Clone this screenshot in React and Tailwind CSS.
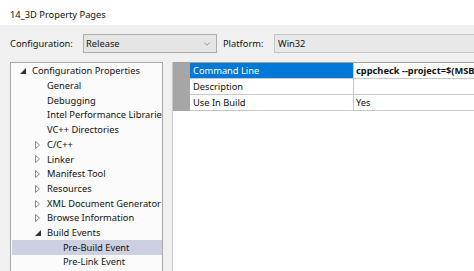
import { ChevronDown } from 'lucide-react';

const treeItems = [
  { label: 'Configuration Properties', level: 0, state: 'open' },
  { label: 'General', level: 1 },
  { label: 'Debugging', level: 1 },
  { label: 'Intel Performance Libraries', level: 1 },
  { label: 'VC++ Directories', level: 1 },
  { label: 'C/C++', level: 1, state: 'closed' },
  { label: 'Linker', level: 1, state: 'closed' },
  { label: 'Manifest Tool', level: 1, state: 'closed' },
  { label: 'Resources', level: 1, state: 'closed' },
  { label: 'XML Document Generator', level: 1, state: 'closed' },
  { label: 'Browse Information', level: 1, state: 'closed' },
  { label: 'Build Events', level: 1, state: 'open' },
  { label: 'Pre-Build Event', level: 2, selected: true },
  { label: 'Pre-Link Event', level: 2 },
];

const props = [
  { name: 'Command Line', value: 'cppcheck --project=$(MSBuildProjectFullPath)', selected: true },
  { name: 'Description', value: '' },
  { name: 'Use In Build', value: 'Yes' },
];

// little tree expander glyphs
const Expander = ({ state }) => {
  if (state === 'open') {
    return (
      <svg width="6" height="6" viewBox="0 0 6 6">
        <path d="M6 0 L6 6 L0 6 Z" fill="#333" />
      </svg>
    );
  }
  return (
    <svg width="5" height="8" viewBox="0 0 5 8">
      <path d="M0.5 0.5 L4.5 4 L0.5 7.5 Z" fill="none" stroke="#8a8a8a" strokeWidth="1" />
    </svg>
  );
};

const indent = ['pl-[20px]', 'pl-[35px]', 'pl-[51px]'];

const App = () => {
  return (
    <div
      className="w-[474px] h-[271px] overflow-hidden bg-[#f0f0f0] text-[9.3px] text-[#111]"
      style={{ fontFamily: '"Noto Sans", sans-serif' }}
    >
      {/* title bar */}
      <div className="h-[25px] bg-white flex items-center pl-[10px] pt-[5px]">
        14_3D Property Pages
      </div>

      {/* configuration row */}
      <div className="flex items-center mt-[9px] h-[19px]">
        <span className="pl-[10px] w-[83px] shrink-0">Configuration:</span>
        <div className="w-[134px] shrink-0 h-[19px] bg-[#e5e5e5] border border-[#adadad] flex items-center justify-between pl-[2px] pr-[4px]">
          <span>Release</span>
          <ChevronDown size={10} strokeWidth={1.3} className="text-[#555]" />
        </div>
        <span className="ml-[6px] w-[51px] shrink-0">Platform:</span>
        <div className="flex-1 h-[19px] bg-[#e8e8e8] border border-[#c4c4c4] border-r-0 flex items-center pl-[3px]">
          <span>Win32</span>
        </div>
      </div>

      {/* main area */}
      <div className="flex mt-[9px] h-[209px]">
        <div className="ml-[10px] w-[153px] shrink-0 h-[220px] bg-[#fbfbfb] border border-[#a9a9a9] pt-[1px] pl-[1px] overflow-hidden">
          {treeItems.map((item, i) => (
            <div
              key={i}
              className={`relative h-[14.7px] flex items-center whitespace-nowrap ${indent[item.level]} ${item.selected ? 'bg-[#cdd0e0]' : ''}`}
            >
              {item.state && (
                <span className={`absolute flex items-center ${item.level === 0 ? 'left-[8px]' : 'left-[23px]'}`}>
                  <Expander state={item.state} />
                </span>
              )}
              <span>{item.label}</span>
            </div>
          ))}
        </div>

        <div className="ml-[9px] flex-1 min-w-0 overflow-hidden h-[220px] bg-white border-l border-[#c8c8c8]">
          <div className="flex border-t border-[#a0a0a0]">
            <div className="w-[17px] shrink-0 bg-[#a6a6a6]" />
            <div className="flex-1 min-w-0">
              {props.map((p, i) => (
                <div key={i} className="flex h-[16px] border-b border-[#c8c8c8]">
                  <div
                    className={`w-[164px] shrink-0 pl-[3px] flex items-center border-r border-[#c8c8c8] ${p.selected ? 'bg-[#0078d7] text-white' : ''}`}
                  >
                    {p.name}
                  </div>
                  <div className={`flex-1 min-w-0 pl-[2px] flex items-center whitespace-nowrap overflow-hidden ${p.selected ? 'font-bold' : ''}`}>
                    {p.value}
                  </div>
                </div>
              ))}
            </div>
          </div>
        </div>
      </div>
    </div>
  );
};

export default App;
